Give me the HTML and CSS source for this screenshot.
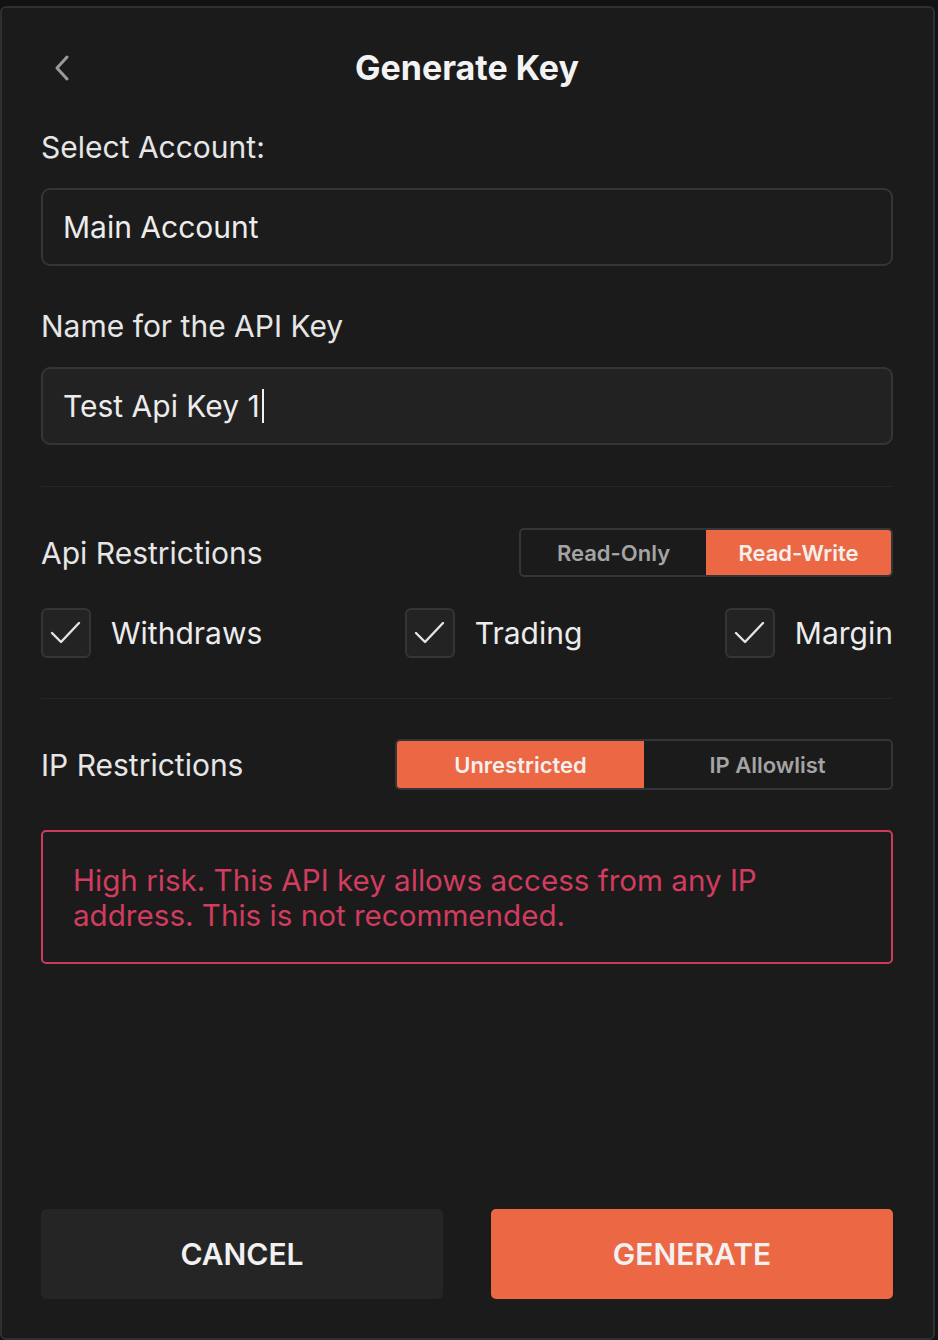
FILE: index.html
```html
<!DOCTYPE html>
<html lang="en">
<head>
    <meta charset="UTF-8">
    <meta name="viewport" content="width=device-width, initial-scale=1.0">
    <title>Generate Key</title>
    <link rel="stylesheet" href="styles.css">
</head>
<body>
<div class="panel">
    <div class="header">
        <button class="back-button" aria-label="Back">
            <svg width="16" height="26" viewBox="0 0 16 26">
                <polyline points="13,2 3,13 13,24" fill="none" stroke="#9a9a9a" stroke-width="3" stroke-linecap="round" stroke-linejoin="round"/>
            </svg>
        </button>
        <div class="title">Generate Key</div>
    </div>

    <div class="field-label first">Select Account:</div>
    <div class="input">Main Account</div>

    <div class="field-label">Name for the API Key</div>
    <div class="input input-active">Test Api Key 1<span class="caret"></span></div>

    <div class="divider"></div>

    <div class="row api-row">
        <div class="row-label">Api Restrictions</div>
        <div class="segment segment-small">
            <div class="segment-item">Read-Only</div>
            <div class="segment-item active">Read-Write</div>
        </div>
    </div>

    <div class="checks">
        <label class="check">
            <span class="check-box">
                <svg width="46" height="46" viewBox="0 0 46 46"><polyline points="9,23 18,32 36,13" fill="none" stroke="#e4e4e4" stroke-width="2.4" stroke-linecap="round" stroke-linejoin="round"/></svg>
            </span>
            <span class="check-label">Withdraws</span>
        </label>
        <label class="check">
            <span class="check-box">
                <svg width="46" height="46" viewBox="0 0 46 46"><polyline points="9,23 18,32 36,13" fill="none" stroke="#e4e4e4" stroke-width="2.4" stroke-linecap="round" stroke-linejoin="round"/></svg>
            </span>
            <span class="check-label">Trading</span>
        </label>
        <label class="check">
            <span class="check-box">
                <svg width="46" height="46" viewBox="0 0 46 46"><polyline points="9,23 18,32 36,13" fill="none" stroke="#e4e4e4" stroke-width="2.4" stroke-linecap="round" stroke-linejoin="round"/></svg>
            </span>
            <span class="check-label">Margin</span>
        </label>
    </div>

    <div class="divider"></div>

    <div class="row ip-row">
        <div class="row-label">IP Restrictions</div>
        <div class="segment segment-wide">
            <div class="segment-item active">Unrestricted</div>
            <div class="segment-item">IP Allowlist</div>
        </div>
    </div>

    <div class="warning">High risk. This API key allows access from any IP address. This is not recommended.</div>

    <div class="actions">
        <button class="btn btn-cancel">CANCEL</button>
        <button class="btn btn-generate">GENERATE</button>
    </div>
</div>
</body>
</html>
```

FILE: styles.css
```css
* {
    box-sizing: border-box;
    margin: 0;
    padding: 0;
    font-family: Inter, "Noto Sans", sans-serif;
}

body, html {
    height: 100%;
    overflow: hidden;
    background-color: #121213;
}

.panel {
    display: flex;
    flex-direction: column;
    width: 935px;
    height: 1334px;
    margin-top: 6px;
    padding: 0 40px 39px 39px;
    background-color: #1b1b1c;
    border: 2px solid #2d2f34;
    border-radius: 6px;
}

.header {
    position: relative;
    padding-top: 40px;
    height: 80px;
}

.back-button {
    position: absolute;
    left: 13px;
    top: 47px;
    background: none;
    border: none;
    cursor: pointer;
}

.title {
    text-align: center;
    color: #f3f3f3;
    font-size: 34px;
    font-weight: 650;
    line-height: 40px;
}

.field-label {
    margin-top: 42px;
    color: #e6e6e6;
    font-size: 30px;
    line-height: 36px;
}

.field-label.first {
    margin-top: 41px;
}

.input {
    display: flex;
    align-items: center;
    margin-top: 23px;
    height: 78px;
    padding: 0 20px;
    background-color: #1c1c1d;
    border: 2px solid #33353b;
    border-radius: 9px;
    color: #ececec;
    font-size: 30px;
}

.input-active {
    background-color: #222223;
}

.caret {
    display: inline-block;
    width: 2px;
    height: 34px;
    margin-left: 2px;
    background-color: #f0f0f0;
}

.divider {
    height: 1px;
    margin-top: 41px;
    background-color: #262627;
}

.row {
    display: flex;
    justify-content: space-between;
    align-items: center;
}

.api-row {
    margin-top: 41px;
}

.ip-row {
    margin-top: 40px;
}

.row-label {
    color: #e6e6e6;
    font-size: 30px;
}

.segment {
    display: flex;
    border: 2px solid #33353b;
    border-radius: 5px;
    overflow: hidden;
}

.segment-small {
    width: 374px;
    height: 49px;
}

.segment-wide {
    width: 498px;
    height: 51px;
}

.segment-item {
    flex: 1;
    display: flex;
    align-items: center;
    justify-content: center;
    color: #a4a4a4;
    font-size: 22px;
    font-weight: 600;
}

.segment-item.active {
    background-color: #ec6744;
    color: #f4efec;
}

.checks {
    display: flex;
    justify-content: space-between;
    margin-top: 31px;
}

.check {
    display: flex;
    align-items: center;
    gap: 20px;
}

.check-box {
    display: flex;
    width: 50px;
    height: 50px;
    background-color: #232324;
    border: 2px solid #33353b;
    border-radius: 6px;
}

.check-label {
    color: #ececec;
    font-size: 30px;
}

.checks + .divider {
    margin-top: 40px;
}

.warning {
    margin-top: 40px;
    height: 134px;
    padding: 31px 30px 0 30px;
    border: 2px solid #cf3a5b;
    border-radius: 5px;
    color: #d23c5e;
    font-size: 29.6px;
    line-height: 35px;
}

.actions {
    display: flex;
    justify-content: space-between;
    margin-top: auto;
}

.btn {
    width: 402px;
    height: 90px;
    border: none;
    border-radius: 5px;
    color: #f1f1f1;
    font-size: 30px;
    font-weight: 600;
    cursor: pointer;
}

.btn-cancel {
    background-color: #252526;
}

.btn-generate {
    background-color: #ec6744;
}
```
